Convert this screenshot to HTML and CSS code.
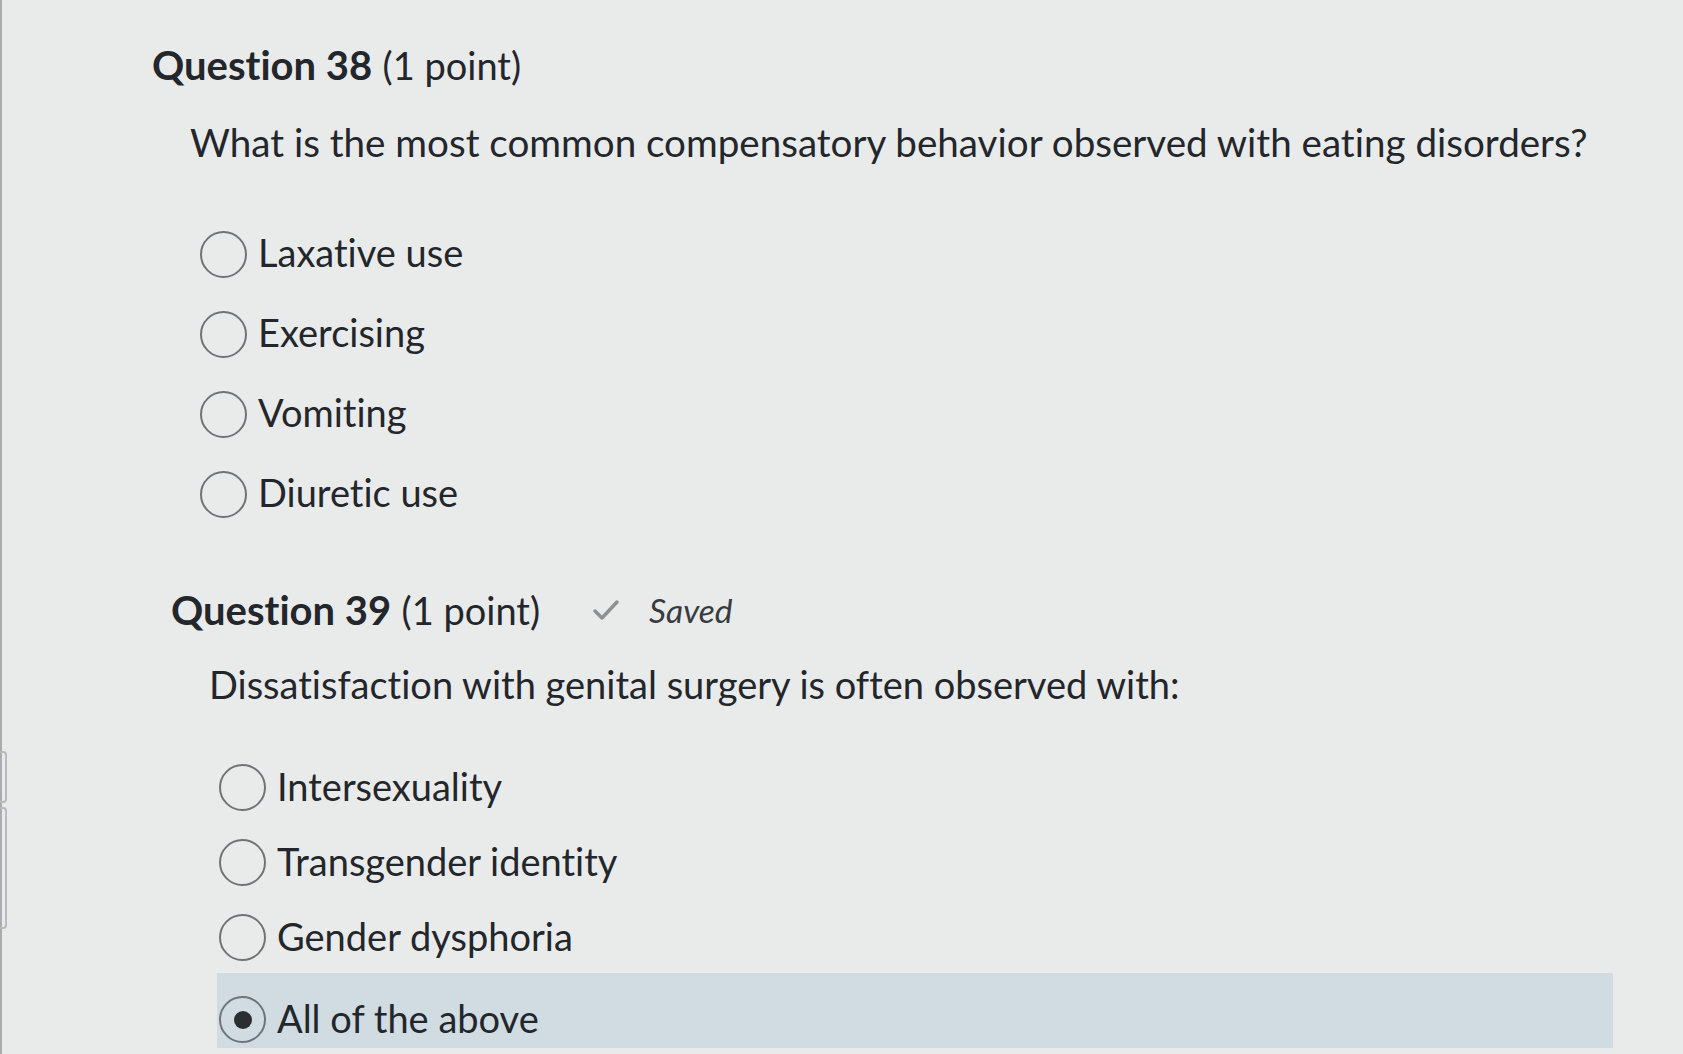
FILE: index.html
```html
<!DOCTYPE html>
<html lang="en">
<head>
    <meta charset="UTF-8">
    <meta name="viewport" content="width=device-width, initial-scale=1.0">
    <title>Quiz</title>
    <link rel="stylesheet" href="styles.css">
</head>
<body>
    <div class="edge">
        <div class="edge-tab"></div>
        <div class="edge-tab tall"></div>
    </div>
    <div class="quiz">
        <div class="question q38">
            <h2 class="question-title">
                <span><b>Question 38</b> <span class="points">(1 point)</span></span>
            </h2>
            <p class="question-text">What is the most common compensatory behavior observed with eating disorders?</p>
            <div class="options">
                <label class="option"><span class="radio"></span>Laxative use</label>
                <label class="option"><span class="radio"></span>Exercising</label>
                <label class="option"><span class="radio"></span>Vomiting</label>
                <label class="option"><span class="radio"></span>Diuretic use</label>
            </div>
        </div>
        <div class="question q39">
            <h2 class="question-title">
                <span><b>Question 39</b> <span class="points">(1 point)</span></span>
                <span class="saved">
                    <svg width="28" height="24" viewBox="0 0 28 24"><path d="M3 13 L10 20 L25 4" fill="none" stroke="#8c9194" stroke-width="3.5" stroke-linecap="round" stroke-linejoin="round"/></svg>
                    <i>Saved</i>
                </span>
            </h2>
            <p class="question-text">Dissatisfaction with genital surgery is often observed with:</p>
            <div class="options compact">
                <label class="option"><span class="radio"></span>Intersexuality</label>
                <label class="option"><span class="radio"></span>Transgender identity</label>
                <label class="option"><span class="radio"></span>Gender dysphoria</label>
                <label class="option selected"><span class="radio"></span>All of the above</label>
            </div>
        </div>
    </div>
</body>
</html>
```

FILE: styles.css
```css
body {
    margin: 0;
    background-color: #e9ebea;
    font-family: Lato, "Open Sans", sans-serif;
    font-variant-ligatures: none;
    color: #23262b;
    border-left: 2px solid #a9adaf;
    min-height: 1054px;
    box-sizing: border-box;
}
.edge {
    position: absolute;
    left: 0;
    top: 751px;
    display: flex;
    flex-direction: column;
    gap: 4px;
}
.edge-tab {
    width: 5px;
    height: 48px;
    border: 2px solid #b6babc;
    border-left: none;
    border-radius: 0 4px 4px 0;
}
.edge-tab.tall {
    height: 118px;
}
.quiz {
    padding: 42px 0 0 150px;
}
.question-title {
    margin: 0;
    font-size: 40px;
    line-height: 46px;
    font-weight: 400;
    display: flex;
    align-items: center;
    gap: 52px;
}
.question-title b {
    font-weight: 700;
}
.points {
    font-size: 38px;
}
.question-text {
    margin: 34px 0 0 38px;
    font-size: 38.6px;
    line-height: 40px;
}
.options {
    margin: 50px 0 0 48px;
}
.option {
    display: flex;
    align-items: center;
    gap: 11px;
    height: 80px;
    font-size: 38px;
    box-sizing: border-box;
}
.radio {
    width: 47px;
    height: 47px;
    border: 2px solid #6f7477;
    border-radius: 50%;
    box-sizing: border-box;
    flex-shrink: 0;
    display: flex;
    justify-content: center;
    align-items: center;
    margin-top: 4px;
}
.q39 {
    margin: 55px 0 0 19px;
}
.q39 .question-text {
    margin-top: 31px;
    font-size: 38px;
}
.options.compact {
    margin-top: 44px;
    margin-left: 46px;
    width: 1396px;
}
.options.compact .option {
    height: 75px;
    padding-left: 2px;
}
.options.compact .option.selected {
    background-color: #d0dce2;
    padding-top: 14px;
}
.option.selected .radio::after {
    content: "";
    width: 18px;
    height: 18px;
    border-radius: 50%;
    background-color: #2b2e31;
}
.saved {
    display: flex;
    align-items: center;
    gap: 29px;
    font-size: 33.5px;
    color: #383b3f;
}
```
